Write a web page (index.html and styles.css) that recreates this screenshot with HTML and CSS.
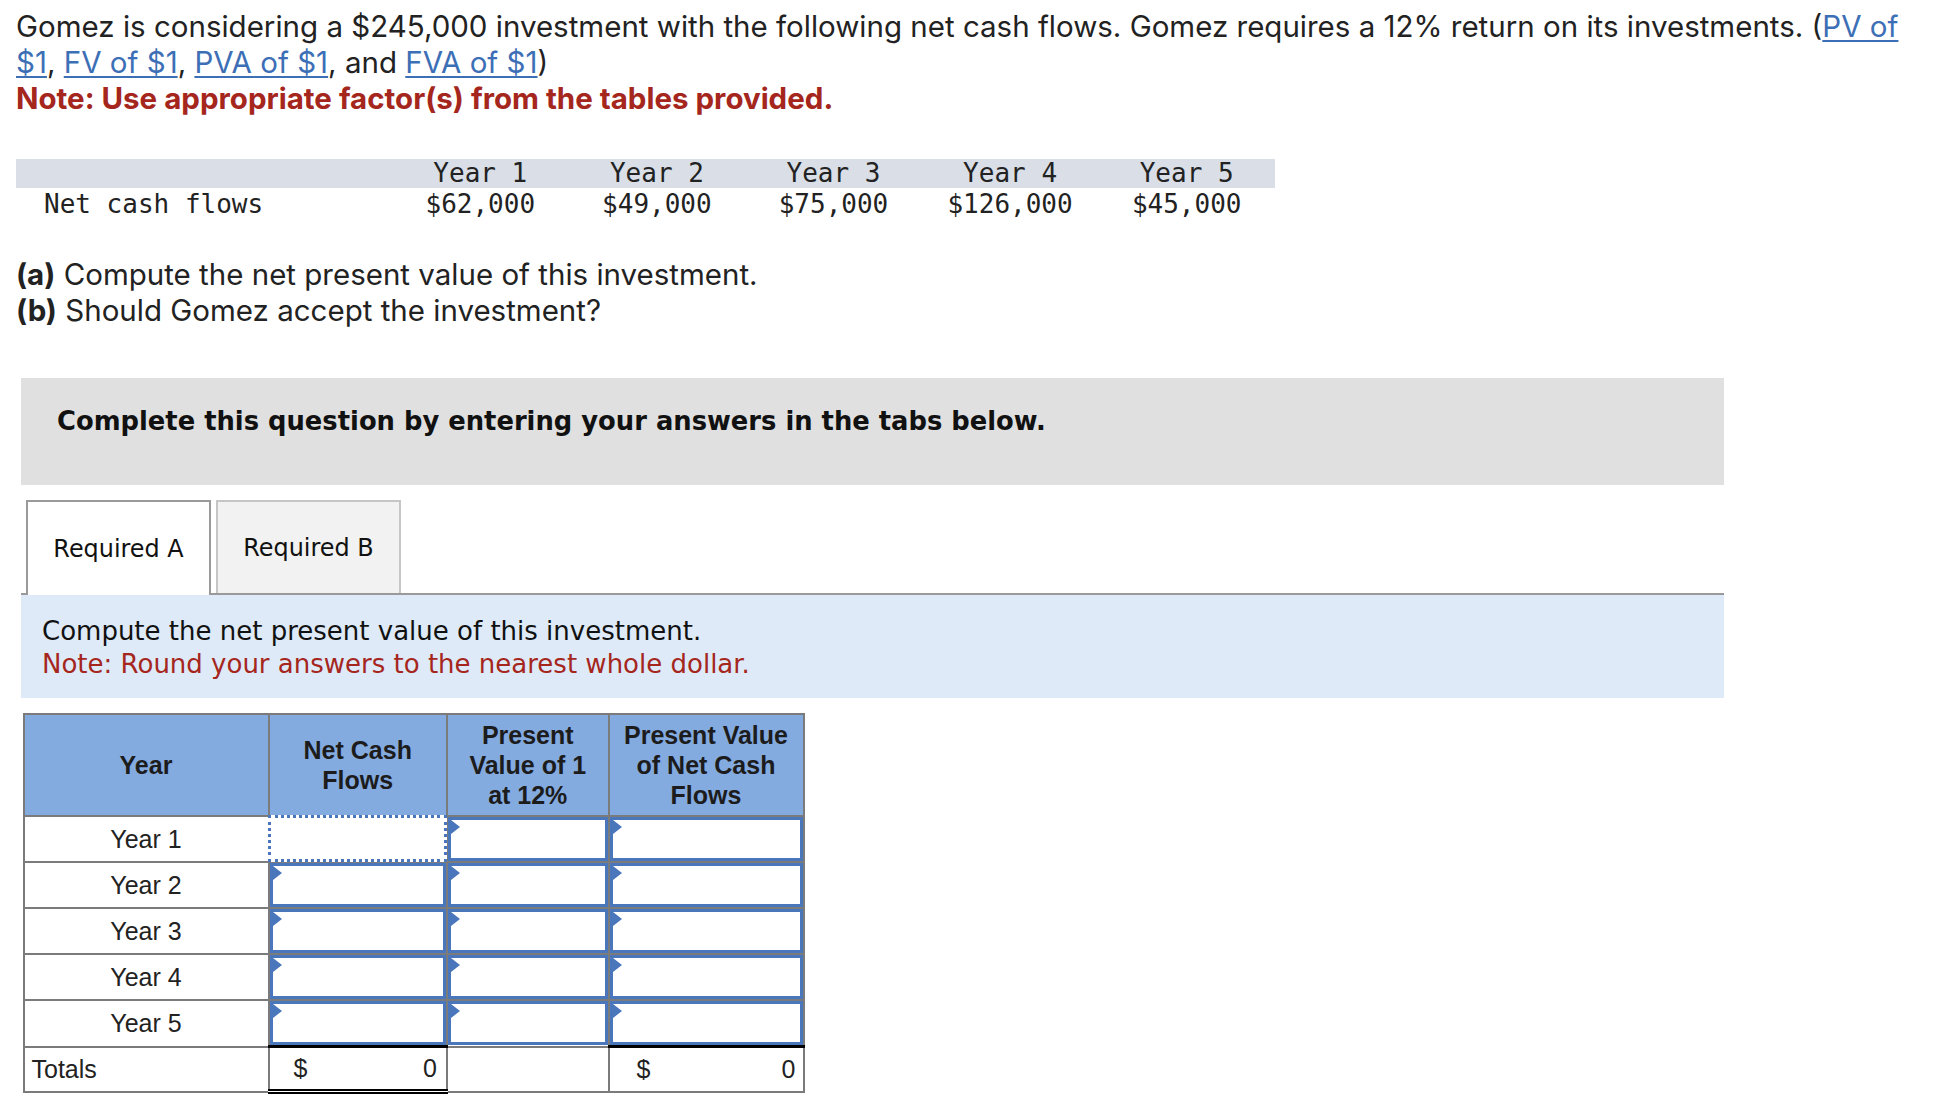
FILE: index.html
```html
<!DOCTYPE html>
<html lang="en">
<head>
<meta charset="utf-8">
<title>Gomez NPV</title>
<link rel="stylesheet" href="styles.css">
</head>
<body>
<div class="page">
  <p class="intro">Gomez is considering a $245,000 investment with the following net cash flows. Gomez requires a 12% return on its investments. (<a href="#">PV of<br>$1</a>, <a href="#">FV of $1</a>, <a href="#">PVA of $1</a>, and <a href="#">FVA of $1</a>)</p>
  <p class="note">Note: Use appropriate factor(s) from the tables provided.</p>

  <table class="cash">
    <colgroup><col class="c-lbl"><col><col><col><col><col></colgroup>
    <thead>
      <tr><th></th><th>Year 1</th><th>Year 2</th><th>Year 3</th><th>Year 4</th><th>Year 5</th></tr>
    </thead>
    <tbody>
      <tr><td class="lbl">Net cash flows</td><td>$62,000</td><td>$49,000</td><td>$75,000</td><td>$126,000</td><td>$45,000</td></tr>
    </tbody>
  </table>

  <p class="parts"><b>(a)</b> Compute the net present value of this investment.<br><b>(b)</b> Should Gomez accept the investment?</p>

  <section class="question">
    <div class="instruct">Complete this question by entering your answers in the tabs below.</div>

    <div class="tabs">
      <div class="tab active">Required A</div>
      <div class="tab">Required B</div>
    </div>

    <div class="panel-head">
      <p>Compute the net present value of this investment.</p>
      <p class="red">Note: Round your answers to the nearest whole dollar.</p>
    </div>

    <table class="answer">
      <colgroup><col class="a1"><col class="a2"><col class="a3"><col class="a4"></colgroup>
      <thead>
        <tr><th>Year</th><th>Net Cash Flows</th><th>Present Value of 1 at 12%</th><th>Present Value of Net Cash Flows</th></tr>
      </thead>
      <tbody>
        <tr><td class="yr">Year 1</td><td class="in"><div class="inp focus"><input type="text"></div></td><td class="in"><div class="inp"><input type="text"></div></td><td class="in"><div class="inp"><input type="text"></div></td></tr>
        <tr><td class="yr">Year 2</td><td class="in"><div class="inp"><input type="text"></div></td><td class="in"><div class="inp"><input type="text"></div></td><td class="in"><div class="inp"><input type="text"></div></td></tr>
        <tr><td class="yr">Year 3</td><td class="in"><div class="inp"><input type="text"></div></td><td class="in"><div class="inp"><input type="text"></div></td><td class="in"><div class="inp"><input type="text"></div></td></tr>
        <tr><td class="yr">Year 4</td><td class="in"><div class="inp"><input type="text"></div></td><td class="in"><div class="inp"><input type="text"></div></td><td class="in"><div class="inp"><input type="text"></div></td></tr>
        <tr><td class="yr">Year 5</td><td class="in"><div class="inp"><input type="text"></div></td><td class="in"><div class="inp"><input type="text"></div></td><td class="in"><div class="inp"><input type="text"></div></td></tr>
        <tr class="totals"><td class="tot-lbl">Totals</td><td class="amt amt-a"><span>$</span><span>0</span></td><td></td><td class="amt amt-b"><span>$</span><span>0</span></td></tr>
      </tbody>
    </table>
  </section>
</div>
</body>
</html>
```

FILE: styles.css
```css
html, body {
  margin: 0;
  padding: 0;
  background: #fff;
}

.page {
  padding: 8px 16px 0;
  color: #222;
}

.intro,
.note,
.parts {
  margin: 0;
  font-family: "Inter", "Liberation Sans", sans-serif;
  font-size: 29.5px;
  line-height: 36px;
}

.intro a {
  color: #3d6fb6;
  text-decoration: underline;
  text-underline-offset: 3px;
}

.note {
  color: #a5261d;
  font-weight: 700;
}

/* given data table */
.cash {
  margin-top: 43px;
  border-collapse: collapse;
  width: 1259px;
  table-layout: fixed;
  font-family: "DejaVu Sans Mono", monospace;
  font-size: 26px;
  color: #222;
}

.cash .c-lbl { width: 376px; }

.cash th {
  background: #d9dee7;
  font-weight: normal;
  height: 29px;
  line-height: 29px;
  padding: 0;
  text-align: center;
}

.cash td {
  padding: 0;
  line-height: 32px;
  text-align: center;
}

.cash td.lbl {
  text-align: left;
  padding-left: 28px;
}

.parts {
  margin-top: 36px;
}

/* question area */
.question {
  margin: 50px 0 0 5px;
  width: 1703px;
}

.instruct {
  background: #e0e0e0;
  padding: 28px 36px 49px;
  font-family: "DejaVu Sans", Verdana, sans-serif;
  font-weight: 700;
  font-size: 25.8px;
  line-height: 30px;
  color: #111;
}

.tabs {
  margin-top: 15px;
  display: flex;
  align-items: flex-start;
  gap: 5px;
  padding-left: 5px;
  border-bottom: 2px solid #9a9a9a;
  height: 93px;
}

.tab {
  box-sizing: border-box;
  width: 185px;
  height: 93px;
  border: 2px solid #c6c6c6;
  border-bottom: none;
  background: #f2f2f2;
  display: flex;
  align-items: center;
  justify-content: center;
  font-family: "DejaVu Sans", Verdana, sans-serif;
  font-size: 23.9px;
  color: #111;
}

.tab.active {
  height: 95px;
  border-color: #9a9a9a;
  background: #fff;
  position: relative;
}

.panel-head {
  background: #deeaf7;
  padding: 20px 21px 17px;
  font-family: "DejaVu Sans", Verdana, sans-serif;
  font-size: 26px;
  line-height: 33px;
  color: #111;
}

.panel-head p { margin: 0; }
.panel-head .red { color: #a5261d; }

/* answer table */
.answer {
  margin: 15px 0 0 1.5px;
  border-collapse: collapse;
  table-layout: fixed;
  width: 780px;
  font-family: "Liberation Sans", Arial, sans-serif;
  color: #222;
}

.answer .a1 { width: 245px; }
.answer .a2 { width: 178.5px; }
.answer .a3 { width: 161.5px; }
.answer .a4 { width: 195px; }

.answer th,
.answer td {
  border: 2px solid #7b7b7b;
}

.answer th {
  background: #84abe0;
  font-weight: 700;
  font-size: 25px;
  line-height: 30px;
  padding: 0 8px;
  height: 100px;
  color: #1c1c1c;
}

.answer td {
  height: 44px;
  padding: 0;
  font-size: 25px;
}

.answer td.yr { text-align: center; }

.inp {
  position: relative;
  height: 44px;
}

.inp input {
  display: block;
  box-sizing: border-box;
  width: 100%;
  height: 100%;
  margin: 0;
  padding: 0 6px;
  border: 3px solid #4a76bb;
  background: #fff;
  font: 24px "Liberation Sans", Arial, sans-serif;
  outline: none;
}

.inp::before {
  content: "";
  position: absolute;
  left: 3px;
  top: 3px;
  border-left: 9px solid #4a76bb;
  border-top: 7px solid transparent;
  border-bottom: 7px solid transparent;
}

.inp.focus {
  margin: -2px -1px -1px -2px;
  height: 47px;
}

.inp.focus::before { display: none; }

.inp.focus input {
  border: 3px dotted #4a76bb;
}

.totals td {
  height: 41px;
}

.totals td.tot-lbl {
  padding-left: 7px;
}

.totals td.amt span:first-child {
  float: left;
}

.totals td.amt span:last-child {
  float: right;
}

.totals td.amt-a {
  padding: 0 9px 0 24px;
  border-top: 3px solid #000;
  border-bottom: 5px double #000;
}

.totals td.amt-b {
  padding: 0 7px 0 27px;
  border-top: 3px solid #000;
}
```
